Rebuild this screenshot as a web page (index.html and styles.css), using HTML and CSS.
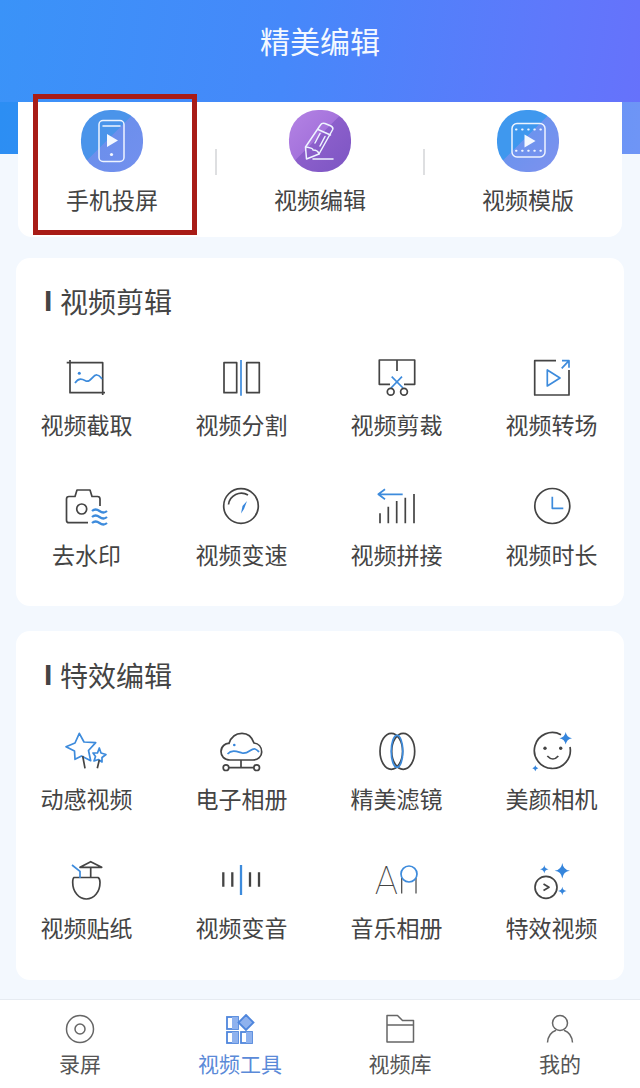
FILE: index.html
```html
<!DOCTYPE html>
<html lang="zh-CN">
<head>
<meta charset="utf-8">
<title>精美编辑</title>
<link rel="stylesheet" href="styles.css">
</head>
<body>
<div class="app">
  <header class="topbar"><h1 class="topbar-title">精美编辑</h1></header>
  <div class="quick-band">
    <div class="quick-card">
      <div class="quick-item">
        <span class="squircle squircle-blue">
          <svg class="quick-svg" viewBox="0 0 62 62"><rect class="w" x="18" y="10.5" width="25" height="41" rx="4"/><path class="w" d="M22 16H39"/><path class="wf" d="M26 24L37 30.5L26 37Z"/><circle class="wf" cx="30.5" cy="44.5" r="1.6"/></svg>
        </span>
        <span class="quick-label">手机投屏</span>
      </div>
      <span class="quick-divider"></span>
      <div class="quick-item">
        <span class="squircle squircle-purple">
          <svg class="quick-svg" viewBox="0 0 62 62"><path class="w" d="M31.4 15Q33 12.5 36 13.5L42 16Q44.5 17.5 43.7 19.5L30 44L17.5 49L16.5 37Z"/><path class="w" d="M29 19.5L41.5 25M26 33L31 23.5M31 36L36 26.5M17 37Q24 38 24 40Q29 40 30 44"/><path class="w" d="M24 49H44"/></svg>
        </span>
        <span class="quick-label">视频编辑</span>
      </div>
      <span class="quick-divider"></span>
      <div class="quick-item">
        <span class="squircle squircle-film">
          <svg class="quick-svg" viewBox="0 0 62 62"><rect class="w" x="15" y="13.5" width="33" height="33.5" rx="5"/><path class="w dots" d="M19 19.5H45M19 40.7H45"/><path class="wf" d="M27.5 24.5L38.5 31L27.5 37.5Z"/></svg>
        </span>
        <span class="quick-label">视频模版</span>
      </div>
    </div>
  </div>

  <section class="panel panel-first">
    <h2 class="panel-title"><span class="panel-mark">I</span>视频剪辑</h2>
    <div class="tools">
      <div class="tool">
        <svg class="tool-icon" viewBox="0 0 48 44"><path class="d" d="M3.7 7.7H39.7V40M7 5V37.7H42"/><circle class="bf" cx="16.3" cy="18.3" r="1.5"/><path class="b" d="M12 28C16 22 20 24.5 23 26C28 28 30 19 34 20C37 20.5 38 23 39 24"/></svg>
        <span class="tool-label">视频截取</span>
      </div>
      <div class="tool">
        <svg class="tool-icon" viewBox="0 0 48 44"><rect class="d" x="6" y="7.7" width="12.7" height="30"/><rect class="d" x="28.7" y="7.7" width="12.6" height="30"/><path class="b" d="M23 5V40.7"/></svg>
        <span class="tool-label">视频分割</span>
      </div>
      <div class="tool">
        <svg class="tool-icon" viewBox="0 0 48 44"><path class="d" d="M17 29.3H6.3V5H41.7V29.3H31M24 5V16"/><path class="b" d="M18.7 21.7L30 33M29 21.7L18 33"/><circle class="d" cx="17.7" cy="36.7" r="3.4"/><circle class="d" cx="31" cy="36.7" r="3.4"/></svg>
        <span class="tool-label">视频剪裁</span>
      </div>
      <div class="tool">
        <svg class="tool-icon" viewBox="0 0 48 44"><path class="d" d="M28 5.7H6.7V40H41V15"/><path class="b" d="M19.3 15V31L32 23ZM33.7 13.3L41 5.7M34 5.7H41V12.7"/></svg>
        <span class="tool-label">视频转场</span>
      </div>
      <div class="tool">
        <svg class="tool-icon" viewBox="0 0 48 44"><path class="d" d="M25 37.7H6A2.5 2.5 0 0 1 3.5 35.2V14A2.5 2.5 0 0 1 6 11.5H12L14 5H27L29 11.5H34.500A2.500 2.500 0 0 1 37 14V21"/><circle class="d" cx="18.700" cy="24" r="5"/><path class="b thick" d="M29 26Q32.500 23 36.500 26T44 26M29 32Q32.500 29 36.500 32T44 32M29 38Q32.500 35 36.500 38T44 38"/></svg>
        <span class="tool-label">去水印</span>
      </div>
      <div class="tool">
        <svg class="tool-icon" viewBox="0 0 48 44"><circle class="d" cx="23" cy="21" r="17.300"/><path class="d" d="M10.500 19.500A13 13 0 0 1 30 10"/><path class="bf" d="M29 16L26 24L23 28.500L24.500 21Z"/></svg>
        <span class="tool-label">视频变速</span>
      </div>
      <div class="tool">
        <svg class="tool-icon" viewBox="0 0 48 44"><path class="b" d="M5.300 9.300H29.700M12 4.300L5.300 9.300L12 14.300"/><path class="d" d="M7 38.300V28.300M15.300 38.300V21.700M23.700 38.300V16M32.300 38.300V12.700M41 38.300V9"/></svg>
        <span class="tool-label">视频拼接</span>
      </div>
      <div class="tool">
        <svg class="tool-icon" viewBox="0 0 48 44"><circle class="d" cx="24.300" cy="21" r="17.500"/><path class="b" d="M24.300 11.700V23.300H35.300"/></svg>
        <span class="tool-label">视频时长</span>
      </div>
    </div>
  </section>

  <section class="panel panel-second">
    <h2 class="panel-title"><span class="panel-mark">I</span>特效编辑</h2>
    <div class="tools">
      <div class="tool">
        <svg class="tool-icon" viewBox="0 0 48 44"><path class="b" d="M16.300 4.300L21 13L32.700 13.700L25.500 21.500L27.700 31.700L18.500 27L12 30.300L11.500 22L3 17.700L12 14Z"/><path class="b" d="M36.300 19L38 24L43 25.500L39 28.500L39 33L35.500 30.500L31 32L32.500 27.500L30 24L34.500 24Z"/><path class="d" d="M19.700 27L22 39.300M36.300 31L34.300 39.300"/></svg>
        <span class="tool-label">动感视频</span>
      </div>
      <div class="tool">
        <svg class="tool-icon" viewBox="0 0 48 44"><path class="d" d="M12 31C6 31 3 27 3 22.500C3 17 8 14 11 14.500C13 8 18 4.300 24 4.300C30 4.300 34 8 36 14C40.500 14.500 43.700 18 43.700 23C43.700 27.500 40 31 35 31ZM23 31V38.700M11 38.700H36"/><circle class="d" cx="8" cy="38.700" r="2.800"/><circle class="d" cx="38.700" cy="38.700" r="2.800"/><circle class="bf" cx="16.300" cy="16" r="1.300"/><path class="b" d="M9.500 25C14 20 20 23 24 24C30 25.700 33 19 37 20C39 20.500 40 22 41 23"/></svg>
        <span class="tool-label">电子相册</span>
      </div>
      <div class="tool">
        <svg class="tool-icon" viewBox="0 0 48 44"><ellipse class="d" cx="18.300" cy="22.300" rx="11.300" ry="18"/><ellipse class="d" cx="30.200" cy="22.300" rx="11.500" ry="18"/><ellipse class="b" cx="24" cy="22.300" rx="5.800" ry="16"/></svg>
        <span class="tool-label">精美滤镜</span>
      </div>
      <div class="tool">
        <svg class="tool-icon" viewBox="0 0 48 44"><path class="d" d="M33 5.700A18 18 0 1 0 42 18"/><circle class="df" cx="17" cy="19.300" r="1.700"/><circle class="df" cx="32.700" cy="19.300" r="1.700"/><path class="d" d="M19.300 27Q25 33 30.300 27"/><path class="bf" d="M37.700 3Q38.600 8.400 44 9.300Q38.600 10.200 37.700 15.600Q36.800 10.200 31.400 9.300Q36.800 8.400 37.700 3Z"/><path class="bf" d="M7.300 36.300Q7.800 38.800 10.300 39.300Q7.800 39.800 7.300 42.300Q6.800 39.800 4.300 39.300Q6.800 38.800 7.300 36.300Z"/></svg>
        <span class="tool-label">美颜相机</span>
      </div>
      <div class="tool">
        <svg class="tool-icon" viewBox="0 0 48 44"><path class="d" d="M9.700 24.500C9.700 34 16 41 23.300 41C31 41 37 34 37 24.500C37 22 36 20 35 19.500H11C10 20 9.700 22 9.700 24.500Z"/><path class="d" d="M17 9.300L27.700 3.700L38.700 9.300ZM27.700 9.300V19"/><path class="b" d="M9 7L17 13.300V20"/></svg>
        <span class="tool-label">视频贴纸</span>
      </div>
      <div class="tool">
        <svg class="tool-icon" viewBox="0 0 48 44"><path class="d thick" d="M5.300 14.300V28.700M14.300 14.300V28.700M32 14.300V28.700M41 14.300V28.700"/><path class="b thick" d="M23 7V37"/></svg>
        <span class="tool-label">视频变音</span>
      </div>
      <div class="tool">
        <svg class="tool-icon" viewBox="0 0 48 44"><text class="icon-letter" x="2" y="35.500">A</text><path class="d slim" d="M28.700 20V35.500M43 20V35.500"/><circle class="b" cx="36" cy="16" r="8"/></svg>
        <span class="tool-label">音乐相册</span>
      </div>
      <div class="tool">
        <svg class="tool-icon" viewBox="0 0 48 44"><circle class="d" cx="18" cy="29.300" r="11"/><path class="d" d="M15.500 26L21 29.300L15.500 32.500"/><path class="bf" d="M34.300 5Q35.200 11.800 42 12.700Q35.200 13.600 34.300 20.400Q33.400 13.600 26.600 12.700Q33.400 11.800 34.300 5Z"/><path class="bf" d="M16.300 7Q16.800 10.800 20.600 11.300Q16.800 11.800 16.300 15.600Q15.800 11.800 12 11.300Q15.800 10.800 16.300 7Z"/><path class="bf" d="M34.300 28.700Q34.800 32.500 38.600 33Q34.800 33.500 34.300 37.300Q33.800 33.500 30 33Q33.800 32.500 34.300 28.700Z"/></svg>
        <span class="tool-label">特效视频</span>
      </div>
    </div>
  </section>

  <nav class="tabbar">
    <div class="tab">
      <svg class="tab-icon" viewBox="0 0 30 30"><circle class="g" cx="15" cy="15" r="13.500"/><circle class="g" cx="15" cy="15" r="5"/></svg>
      <span class="tab-label">录屏</span>
    </div>
    <div class="tab tab-active">
      <svg class="tab-icon" viewBox="0 0 30 30"><rect class="tb" x="2" y="3" width="11" height="12"/><rect class="tbf" x="7" y="3" width="6" height="12"/><path class="tbf tb" d="M21 1L28.500 8.500L21 16L13.500 8.500Z"/><rect class="tb" x="2" y="18" width="11" height="11"/><rect class="tbf" x="7" y="18" width="6" height="11"/><rect class="tb" x="16" y="18" width="11" height="11"/><rect class="tbf" x="21" y="18" width="6" height="11"/></svg>
      <span class="tab-label">视频工具</span>
    </div>
    <div class="tab">
      <svg class="tab-icon" viewBox="0 0 30 30"><path class="g" d="M2 1.500H12.500L17.500 6.500H28.500V28H2ZM2 11H28.500"/></svg>
      <span class="tab-label">视频库</span>
    </div>
    <div class="tab">
      <svg class="tab-icon" viewBox="0 0 30 30"><circle class="g" cx="15" cy="9" r="7.500"/><path class="g" d="M2.500 28.500C3 21 7.500 17.500 11 16.200M27.500 28.500C27 21 22.500 17.500 19 16.200"/></svg>
      <span class="tab-label">我的</span>
    </div>
  </nav>

  <div class="highlight-box"></div>
</div>
</body>
</html>
```

FILE: styles.css
```css
* { box-sizing: border-box; }
html, body { margin: 0; padding: 0; }
body {
  background: #f3f8fe;
  font-family: "Noto Sans CJK SC", "Noto Sans", sans-serif;
  color: #444;
}
.app {
  position: relative;
  width: 640px;
  height: 1088px;
  overflow: hidden;
  display: flex;
  flex-direction: column;
  background: #f3f8fe;
}
.topbar {
  height: 102px;
  flex: none;
  display: flex;
  justify-content: center;
  padding-top: 18px;
  background: linear-gradient(98deg, #3a93f8 0%, #4688fa 45%, #5f78fb 85%, #6672fb 100%);
}
.topbar-title {
  margin: 0;
  font-size: 30px;
  line-height: 44px;
  font-weight: 400;
  color: #f4f9ff;
}
.quick-band {
  flex: none;
  padding: 0 18px;
  background: linear-gradient(98deg, #2c8ef3 0%, #3f8ff5 50%, #6f95f6 100%) top / 100% 52px no-repeat;
}
.quick-card {
  height: 135px;
  padding-top: 8px;
  display: grid;
  grid-template-columns: 188px 2px 188px 2px 188px;
  column-gap: 9px;
  background: #fff;
  border-radius: 0 0 14px 14px;
}
.quick-item {
  display: flex;
  flex-direction: column;
  align-items: center;
}
.quick-divider {
  width: 2px;
  height: 26px;
  margin-top: 39px;
  background: #dedfe1;
}
.squircle {
  width: 62px;
  height: 62px;
  border-radius: 47%;
  display: block;
}
.squircle-blue { background: linear-gradient(135deg, #4a94ea 45%, #6c8fec 46%, #7390ee 100%); }
.squircle-purple { background: linear-gradient(135deg, #b484e4 0%, #a573dc 45%, #8c5fcb 46%, #7c55c3 100%); }
.squircle-film { background: linear-gradient(135deg, #3f98ee 45%, #6d93ee 46%, #7e91ee 100%); }
.quick-svg { display: block; width: 62px; height: 62px; }
.w { fill: none; stroke: #eef4ff; stroke-width: 1.5; stroke-linejoin: round; stroke-linecap: round; }
.wf { fill: #f4f8ff; }
.dots { stroke-width: 2; stroke-dasharray: .5 5.6; }
.quick-label {
  margin-top: 11px;
  font-size: 23px;
  line-height: 32px;
  color: #444;
}
.panel {
  flex: none;
  margin: 21px 16px 0;
  padding: 24px 0 37px;
  background: #fff;
  border-radius: 14px;
}
.panel-first .tools { row-gap: 45px; }
.panel-first { padding-bottom: 36px; }
.panel-second {
  margin-top: 25px;
  padding-top: 25px;
}
.panel-title {
  margin: 0 0 33px;
  padding-left: 28px;
  height: 40px;
  font-size: 28px;
  line-height: 38px;
  font-weight: 400;
  color: #444;
  display: flex;
}
.panel-mark {
  width: 16px;
  font-family: "Liberation Sans", sans-serif;
  font-weight: 700;
  font-size: 30px;
}
.tools {
  display: grid;
  grid-template-columns: repeat(4, 120px);
  column-gap: 35px;
  row-gap: 44px;
  justify-content: center;
  padding-right: 2px;
}
.tool {
  display: flex;
  flex-direction: column;
  align-items: center;
}
.tool-icon {
  display: block;
  width: 48px;
  height: 44px;
}
.tool-label {
  margin-top: 9px;
  font-size: 23px;
  line-height: 32px;
  white-space: nowrap;
  color: #444;
}
.d, .b {
  fill: none;
  stroke-width: 1.7;
  stroke-linejoin: round;
}
.d { stroke: #444; }
.b { stroke: #3d8bdc; }
.thick { stroke-width: 2.3; }
.slim { stroke-width: 1.2; }
.bf { fill: #3585dc; }
.df { fill: #444; }
.icon-letter {
  font-family: "Roboto", "Liberation Sans", sans-serif;
  font-weight: 100;
  font-size: 38px;
  fill: #444;
}
.tabbar {
  position: absolute;
  left: 0;
  right: 0;
  bottom: 0;
  height: 89px;
  padding-top: 14px;
  display: grid;
  grid-template-columns: repeat(4, 160px);
  background: #fff;
  border-top: 1px solid #e6ebf1;
}
.tab {
  display: flex;
  flex-direction: column;
  align-items: center;
}
.tab-icon {
  display: block;
  width: 30px;
  height: 30px;
}
.tab-label {
  margin-top: 4px;
  font-size: 21px;
  line-height: 30px;
  color: #555;
}
.tab-active .tab-label { color: #5b8ad8; }
.g { fill: none; stroke: #666; stroke-width: 1.5; stroke-linejoin: round; }
.tb { fill: none; stroke: #4f86dc; stroke-width: 1.8; }
.tbf { fill: #8fb2ee; }
.highlight-box {
  position: absolute;
  left: 33px;
  top: 94px;
  width: 164px;
  height: 141px;
  border: 5px solid #a81c17;
}
```
